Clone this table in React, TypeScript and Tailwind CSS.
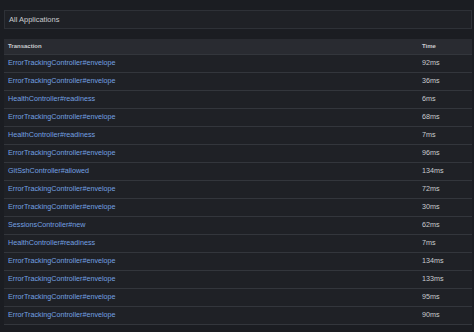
const rows: [string, string][] = [
  ["ErrorTrackingController#envelope", "92ms"],
  ["ErrorTrackingController#envelope", "36ms"],
  ["HealthController#readiness", "6ms"],
  ["ErrorTrackingController#envelope", "68ms"],
  ["HealthController#readiness", "7ms"],
  ["ErrorTrackingController#envelope", "96ms"],
  ["GitSshController#allowed", "134ms"],
  ["ErrorTrackingController#envelope", "72ms"],
  ["ErrorTrackingController#envelope", "30ms"],
  ["SessionsController#new", "62ms"],
  ["HealthController#readiness", "7ms"],
  ["ErrorTrackingController#envelope", "134ms"],
  ["ErrorTrackingController#envelope", "133ms"],
  ["ErrorTrackingController#envelope", "95ms"],
  ["ErrorTrackingController#envelope", "90ms"],
];

export default function App() {
  return (
    <div
      className="w-[474px] h-[332px] overflow-hidden bg-[#1b1d22] pt-[10px] pl-[4px] pr-[2px]"
      style={{ fontFamily: '"Liberation Sans", Arial, sans-serif' }}
    >
      <div className="h-[19px] flex items-center px-[4px] bg-[#1f2126] border border-[#2e3137] text-[7.5px] text-[#c9cbcf]">
        All Applications
      </div>

      <div className="mt-[10px]">
        <div className="h-[16px] flex items-center bg-[#292b31] border-b border-[#33363c] text-[6px] font-bold text-[#c9cbcf]">
          <div className="flex-1 pl-[4px]">Transaction</div>
          <div className="w-[50px]">Time</div>
        </div>
        {rows.map(([name, time], i) => (
          <div
            key={i}
            className="h-[18px] flex items-center bg-[#1f2126] border-b border-[#33363c] text-[7.2px]"
          >
            <div className="flex-1 pl-[4px] text-[#73a0e2]">{name}</div>
            <div className="w-[50px] text-[#c9cbcf]">{time}</div>
          </div>
        ))}
      </div>
    </div>
  );
}
